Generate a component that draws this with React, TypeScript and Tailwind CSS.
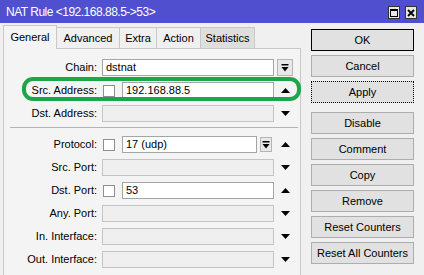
import React from "react";

const Up = () => (
  <svg width="9" height="5" viewBox="0 0 9 5">
    <polygon points="0,5 9,5 4.5,0" fill="#000" />
  </svg>
);
const Down = () => (
  <svg width="9" height="5" viewBox="0 0 9 5">
    <polygon points="0,0 9,0 4.5,5" fill="#000" />
  </svg>
);
const DropIcon = () => (
  <svg width="8" height="8" viewBox="0 0 8 8">
    <rect x="0.5" y="0" width="7" height="1.5" fill="#000" />
    <polygon points="0.5,3 7.5,3 4,7.5" fill="#000" />
  </svg>
);

type Row = {
  label: string;
  check?: boolean;
  value?: string;
  enabled?: boolean;
  arrow?: "up" | "down" | "drop";
  innerDrop?: boolean;
};

const top: Row[] = [
  { label: "Chain:", value: "dstnat", enabled: true, arrow: "drop" },
  { label: "Src. Address:", check: true, value: "192.168.88.5", enabled: true, arrow: "up" },
  { label: "Dst. Address:", arrow: "down" },
];
const bottom: Row[] = [
  { label: "Protocol:", check: true, value: "17 (udp)", enabled: true, arrow: "up", innerDrop: true },
  { label: "Src. Port:", arrow: "down" },
  { label: "Dst. Port:", check: true, value: "53", enabled: true, arrow: "up" },
  { label: "Any. Port:", arrow: "down" },
  { label: "In. Interface:", arrow: "down" },
  { label: "Out. Interface:", arrow: "down" },
];

function FormRow({ r }: { r: Row }) {
  return (
    <div className="flex items-center h-[23px]">
      <div className="w-[93px] text-right">{r.label}</div>
      <div className="ml-[5px] w-[172px] flex items-center">
        {r.check && (
          <>
            <div className="ml-px w-[12px] h-[12px] border border-[#8f8f8f] bg-white" />
            <div className="w-[7px]" />
          </>
        )}
        <div
          className={
            "flex-1 h-[17px] border flex items-center pl-[3px] " +
            (r.enabled ? "bg-white border-[#a5a5a5]" : "bg-[#efefef] border-[#c4c4c4]")
          }
        >
          {r.value}
        </div>
        {r.innerDrop && (
          <div className="ml-[3px] mr-[2px] w-[12px] h-[15px] border border-[#b5b5b5] bg-[#e8e8e8] flex items-center justify-center">
            <DropIcon />
          </div>
        )}
      </div>
      {r.arrow === "drop" ? (
        <div className="ml-[3px] w-[16px] h-[17px] border border-[#b5b5b5] bg-[#e8e8e8] flex items-center justify-center">
          <DropIcon />
        </div>
      ) : (
        <div className="pl-[7px] flex items-center">{r.arrow === "up" ? <Up /> : <Down />}</div>
      )}
    </div>
  );
}

function Btn({ label, kind }: { label: string; kind?: "ok" | "focus" }) {
  const b =
    kind === "ok"
      ? "border-black"
      : kind === "focus"
      ? "border-black border-dotted"
      : "border-[#adadad]";
  return (
    <div className={"h-[22px] border bg-[#e1e1e1] flex items-center justify-center " + b}>{label}</div>
  );
}

export default function App() {
  const tabs = [
    { t: "Advanced", w: "w-[64px]", bg: "bg-[#f0f0f0]" },
    { t: "Extra", w: "w-[38px]", bg: "bg-[#f0f0f0]" },
    { t: "Action", w: "w-[45px]", bg: "bg-[#f0f0f0]" },
    { t: "Statistics", w: "w-[55px]", bg: "bg-[#dedede]" },
  ];
  return (
    <div className="relative w-[424px] h-[275px] overflow-hidden bg-[#f0f0f0] text-[11px] leading-none text-black font-['Liberation_Sans',Arial,sans-serif]">
      <div className="h-[23px] bg-[#4f4fcf] flex items-center pl-[6px] pr-[7px] text-white text-[12px]">
        <span className="flex-1 tracking-[-0.5px]">NAT Rule &lt;192.168.88.5-&gt;53&gt;</span>
        <div className="flex gap-[5px] mt-[2px]">
          <div className="w-[12px] h-[13px] border border-[#333] bg-[#e6e6e6] flex items-center justify-center">
            <div className="w-[8px] h-[8px] border border-black border-t-2" />
          </div>
          <div className="w-[12px] h-[13px] border border-[#333] bg-[#e6e6e6] flex items-center justify-center">
            <svg width="8" height="8" viewBox="0 0 8 8">
              <path d="M1 1 L7 7 M7 1 L1 7" stroke="#000" strokeWidth="1.8" />
            </svg>
          </div>
        </div>
      </div>
      <div className="flex pl-[3px]">
        <div className="w-[298px] pt-[2px]">
          <div className="flex items-end h-[23px]">
            <div className="relative z-10 w-[54px] h-[24px] -mb-px border border-b-0 border-[#c8c8c8] bg-[#f4f4f4] flex items-center justify-center">
              General
            </div>
            {tabs.map((t) => (
              <div
                key={t.t}
                className={
                  "-ml-px h-[21px] border border-b-0 border-[#c8c8c8] flex items-center justify-center " +
                  t.w +
                  " " +
                  t.bg
                }
              >
                {t.t}
              </div>
            ))}
          </div>
          <div className="border border-[#c8c8c8] bg-[#f4f4f4] h-[260px] pt-[7px]">
            {top.map((r) => (
              <FormRow key={r.label} r={r} />
            ))}
            <div className="mt-[2px] mb-[5px] ml-[6px] mr-[2px] h-px bg-[#b4b4b4]" />
            {bottom.map((r) => (
              <FormRow key={r.label} r={r} />
            ))}
          </div>
        </div>
        <div className="ml-[10px] w-[103px] pt-[6px] flex flex-col gap-[4px]">
          <Btn label="OK" kind="ok" />
          <Btn label="Cancel" />
          <Btn label="Apply" kind="focus" />
          <div className="mt-[5px]">
            <Btn label="Disable" />
          </div>
          <Btn label="Comment" />
          <Btn label="Copy" />
          <Btn label="Remove" />
          <Btn label="Reset Counters" />
          <Btn label="Reset All Counters" />
        </div>
      </div>
      <div className="absolute left-[22px] top-[77px] w-[279px] h-[24px] border-[4px] border-[#1da54a] rounded-[11px]" />
    </div>
  );
}
